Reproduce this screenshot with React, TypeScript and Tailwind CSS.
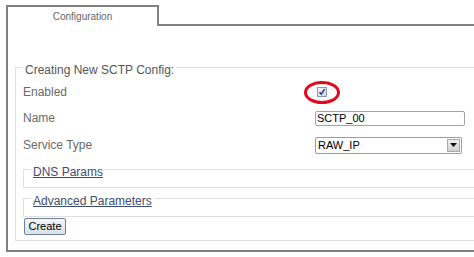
import React from "react";

const rows = [
  { label: "Enabled", kind: "check" },
  { label: "Name", kind: "text" },
  { label: "Service Type", kind: "select" },
] as const;

function Checkbox() {
  return (
    <span className="relative ml-[2px] flex h-[10px] w-[10px] items-center justify-center border border-[#8a9bb3] bg-gradient-to-br from-[#f4f6fa] to-[#c9d3e2]">
      <svg width="8" height="8" viewBox="0 0 8 8">
        <path d="M1.5 4.2 L3.2 6.2 L6.6 1.2" stroke="#23317a" strokeWidth="1.4" fill="none" />
      </svg>
      {/* red annotation circle drawn over the screenshot */}
      <span className="pointer-events-none absolute left-[-14px] top-[-7px] h-[23px] w-[36px] rounded-[50%] border-[3px] border-[#e2091d]" />
    </span>
  );
}

function Field({ kind }: { kind: string }) {
  if (kind === "check") return <Checkbox />;
  if (kind === "text") {
    return (
      <div className="flex h-[15px] w-[150px] items-center rounded-[2px] border border-[#a3a3a3] bg-white pl-[1px] text-[11px] text-black">
        SCTP_00
      </div>
    );
  }
  return (
    <div className="flex h-[17px] w-[147px] items-center justify-between rounded-[2px] border border-[#9c9c9c] bg-white pl-[2px] pr-[1px] text-[11px] text-black">
      <span>RAW_IP</span>
      <span className="flex h-[13px] w-[13px] items-center justify-center border border-[#a8a8a8] bg-gradient-to-b from-[#f0f0f0] to-[#d2d2d2]">
        <svg width="7" height="4" viewBox="0 0 7 4">
          <path d="M0 0 H7 L3.5 4 Z" fill="#111" />
        </svg>
      </span>
    </div>
  );
}

function SubGroup({ title, children }: { title: string; children?: React.ReactNode }) {
  return (
    <fieldset className="border border-[#e0e0e0] pl-[7px] pb-[7px]">
      <legend className="px-[2px] pt-[6px] text-[12px] leading-[15px] text-[#3d4c6e] underline">{title}</legend>
      {children}
    </fieldset>
  );
}

export default function App() {
  return (
    <div className="h-[257px] w-[474px] overflow-hidden bg-white pl-[6px] pt-[5px] font-['Liberation_Sans',Arial,sans-serif]">
      <div className="w-[560px]">
        <div className="flex h-[21px]">
          <div className="flex w-[153px] items-center justify-center border-2 border-b-0 border-[#808080] pb-[1px] text-[10px] text-[#666]">
            Configuration
          </div>
          <div className="flex-1 border-b-2 border-[#808080]" />
        </div>

        <div className="border-b-2 border-l-2 border-[#808080] pb-[9px] pl-[7px] pt-[31px]">
          <fieldset className="border border-[#dedede] pb-[5px] pl-[7px] pt-[1px]">
            <legend className="px-[2px] pt-[6px] text-[12px] leading-[15px] text-[#555]">
              Creating New SCTP Config:
            </legend>

            {rows.map((r, i) => (
              <div key={r.label} className={`flex items-center ${i === 2 ? "h-[28px]" : "h-[26px]"}`}>
                <div className="w-[292px] text-[12px] text-[#6a6a6a]">{r.label}</div>
                <Field kind={r.kind} />
              </div>
            ))}

            <SubGroup title="DNS Params" />
            <SubGroup title="Advanced Parameters" />

            <button className="ml-[1px] mt-[1px] flex h-[17px] w-[42px] items-center justify-center rounded-[2px] border border-[#6f8299] bg-gradient-to-b from-[#f3f6fa] to-[#d9e1eb] text-[11px] text-black">
              Create
            </button>
          </fieldset>
        </div>
      </div>
    </div>
  );
}
